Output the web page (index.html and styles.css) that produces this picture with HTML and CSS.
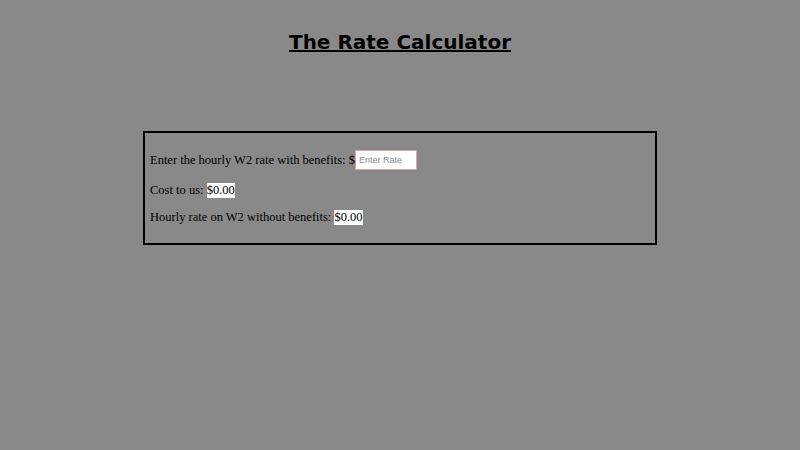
FILE: index.html
```html
<!DOCTYPE html>
<html>
<head>
<meta charset="utf-8">
<link rel="stylesheet" href="styles.css">
</head>
<body>
<h1 class="title">The Rate Calculator</h1>
<div class="box">
  <div class="row row-input">Enter the hourly W2 rate with benefits: $<input class="rate" type="text" placeholder="Enter Rate"></div>
  <div class="row">Cost to us: <span class="value">$0.00</span></div>
  <div class="row">Hourly rate on W2 without benefits: <span class="value">$0.00</span></div>
</div>
</body>
</html>
```
FILE: styles.css
```css
html, body {
  margin: 0;
  padding: 0;
  background: #898989;
}
body {
  font-family: "Liberation Serif", serif;
  font-size: 12.5px;
  color: #000;
  padding-top: 30px;
}
.title {
  margin: 0;
  text-align: center;
  font-family: "DejaVu Sans", sans-serif;
  font-weight: bold;
  font-size: 20px;
  line-height: 24px;
  text-decoration: underline;
}
.box {
  box-sizing: border-box;
  width: 514px;
  margin: 77px auto 0;
  border: 2px solid #000;
  padding: 15px 5px 17px;
  display: flex;
  flex-direction: column;
  gap: 9px;
}
.row {
  line-height: 15px;
  height: 18px;
  display: flex;
  align-items: center;
  white-space: pre;
}
.row-input {
  height: 24px;
}
.rate {
  box-sizing: border-box;
  width: 62px;
  height: 20px;
  margin: 0;
  padding: 0 3px;
  border: 1px solid #d9a3a8;
  background: #fff;
  font-family: "Liberation Sans", Arial, sans-serif;
  font-size: 9px;
  outline: none;
}
.rate::placeholder {
  color: #8a8a8a;
}
.value {
  background: #fff;
}
```
